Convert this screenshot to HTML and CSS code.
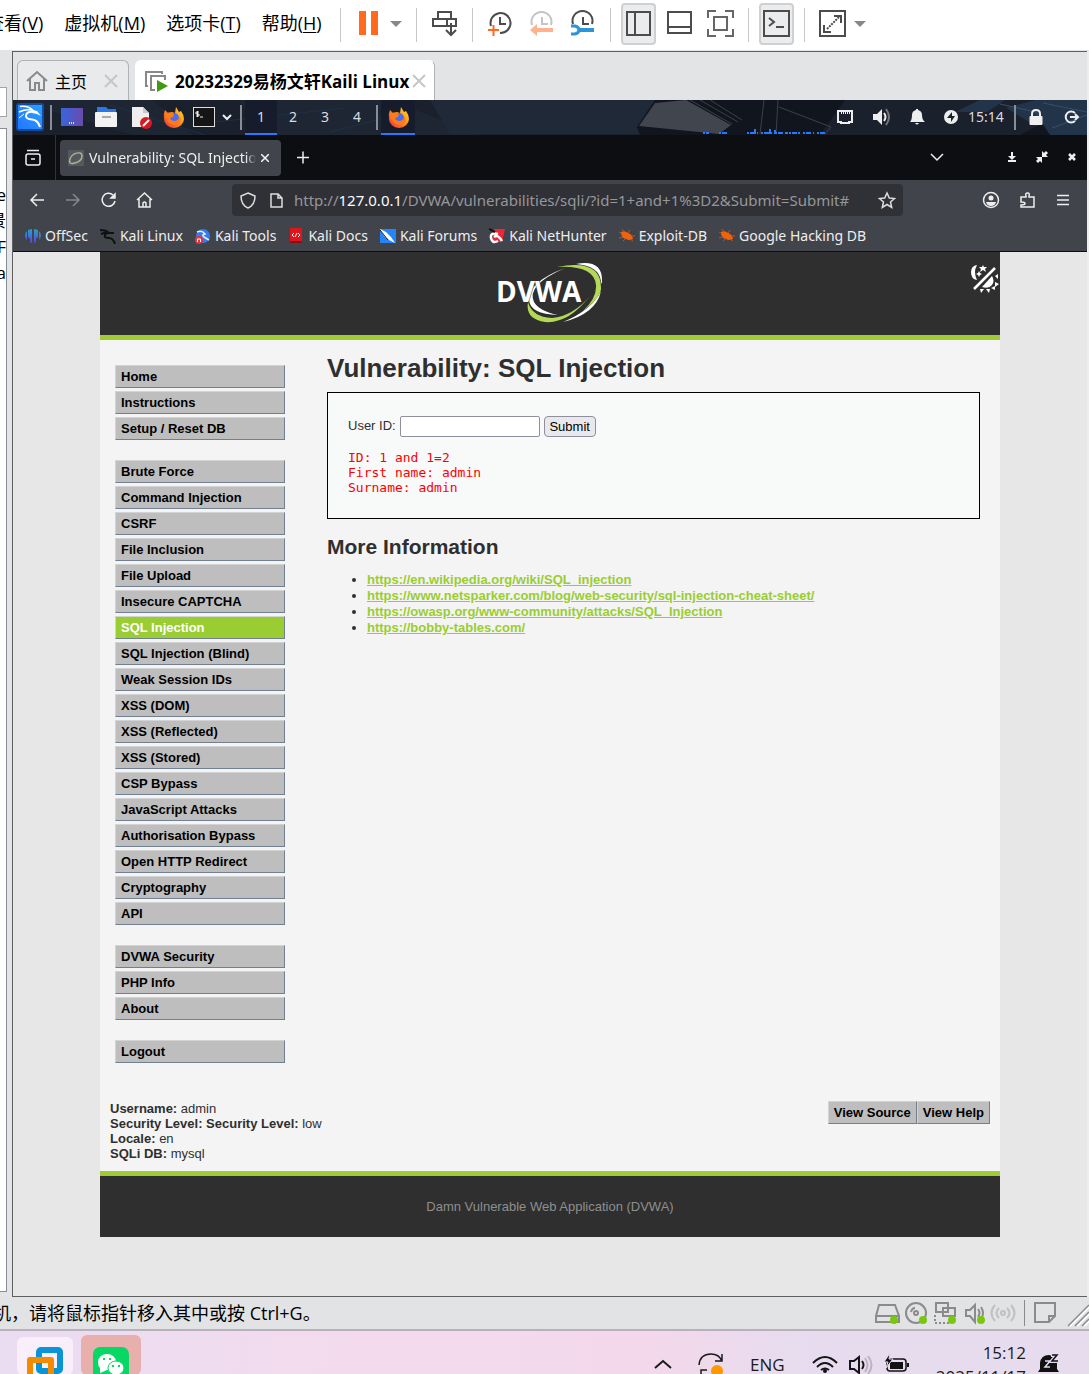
FILE: index.html
```html
<!DOCTYPE html>
<html lang="zh-CN">
<head>
<meta charset="utf-8">
<meta name="viewport" content="width=device-width, initial-scale=1">
<title>20232329易杨文轩Kaili Linux</title>
<link rel="stylesheet" href="styles.css">
</head>
<body>
<header class="toolbar">
  <nav class="menus">
    <button>查看(<u>V</u>)</button>
    <button>虚拟机(<u>M</u>)</button>
    <button>选项卡(<u>T</u>)</button>
    <button>帮助(<u>H</u>)</button>
  </nav>
  <div class="tools">
    <span class="rule"></span>
    <button aria-label="暂停"><svg width="75" height="50" viewBox="341 0 75 50"><path fill="#ff6a1f" d="M359 11h7v24h-7zM371 11h7v24h-7z"/><path fill="#888" d="M390 21h12l-6 6z"/></svg></button>
    <span class="rule"></span>
    <button aria-label="发送"><svg width="55" height="50" viewBox="417 0 55 50" fill="none" stroke="#4c4c4c" stroke-width="2"><path d="M438 19v-7h13v7M433 26v-7h23v7zM447 19v7M451 23v11M446 30l5 5 5-5"/></svg></button>
    <span class="rule"></span>
    <button aria-label="拍摄快照"><svg width="47" height="50" viewBox="473 0 47 50" fill="none" stroke="#4c4c4c" stroke-width="2"><path d="M491 26a10 10 0 1 1 9 7M500 17v7h6"/><path stroke="#ff6a1f" d="M488 30h11M493.500 25v11"/></svg></button>
    <button aria-label="恢复快照"><svg width="42" height="50" viewBox="520 0 42 50" fill="none" stroke="#c4c4c4" stroke-width="2"><path d="M532 25a10 10 0 1 1 19 0M542 17v7h6"/><path fill="#ffb28c" stroke="none" d="M530 30l7-6v4h16v4h-16v4z"/></svg></button>
    <button aria-label="管理快照"><svg width="48" height="50" viewBox="562 0 48 50" fill="none" stroke="#4c4c4c" stroke-width="2"><path d="M573 24a10 10 0 1 1 19 0M583 17v7h6"/><path stroke="#2b95d6" stroke-width="4" d="M578 30h16"/><path stroke="#2b95d6" stroke-width="3" d="M571 26h4q4 1 4 4t-4 4h-4"/></svg></button>
    <span class="rule"></span>
    <button aria-label="显示库"><svg width="50" height="50" viewBox="611 0 50 50" fill="none" stroke="#4c4c4c" stroke-width="2"><rect x="622" y="4" width="33" height="40" rx="3" fill="#ebecee" stroke="#cfd0d1"/><path d="M627 12h23v23h-23zM635 12v23"/></svg></button>
    <button aria-label="缩略图栏"><svg width="40" height="50" viewBox="661 0 40 50" fill="none" stroke="#4c4c4c" stroke-width="2"><path d="M668 12h23v21h-23zM668 27h23"/></svg></button>
    <button aria-label="全屏"><svg width="47" height="50" viewBox="701 0 47 50" fill="none" stroke="#666" stroke-width="2"><path d="M714 17h13v13h-13zM708 18v-7h8M725 11h8v7M733 29v7h-8M716 36h-8v-7"/></svg></button>
    <span class="rule"></span>
    <button aria-label="控制台"><svg width="55" height="50" viewBox="749 0 55 50" fill="none" stroke="#4c4c4c" stroke-width="2"><rect x="760" y="4" width="33" height="40" rx="3" fill="#ebecee" stroke="#cfd0d1"/><path d="M764 11h25v25h-25zM769 18l5 4-5 4M776 27h8"/></svg></button>
    <span class="rule"></span>
    <button aria-label="自由拉伸"><svg width="65" height="50" viewBox="805 0 65 50" fill="none" stroke="#4c4c4c" stroke-width="2"><path d="M820 11h25v25h-25zM834 16h7v7M824 25v7h7"/><path stroke-dasharray="2 1" d="M827 29l12-12"/><path stroke="none" fill="#888" d="M854 21h12l-6 6z"/></svg></button>
  </div>
</header>

<div class="workspace">
  <aside class="library">
    <div class="library-search"></div>
    <div class="library-tree"><span>e</span><span>景</span><span>F</span><span>a</span></div>
  </aside>
  <main class="vm">
    <div class="vm-tabs">
      <div class="vm-tab">
        <svg width="22" height="22" viewBox="0 0 22 22" fill="none" stroke="#8a8a8a" stroke-width="2"><path d="M1 11L11 2l10 9M4 9v11h5v-7h4v7h5V9"/></svg>
        <span>主页</span>
        <button aria-label="关闭主页"><svg width="14" height="14" viewBox="0 0 14 14" stroke="#c6c6c6" stroke-width="2"><path d="M1 1l12 12M13 1L1 13"/></svg></button>
      </div>
      <div class="vm-tab current">
        <svg width="24" height="24" viewBox="0 0 24 24" fill="none" stroke="#888" stroke-width="2"><path d="M4 17H2V3h16v2M11 21H7V7h14v4"/><path stroke="none" fill="#3f9a14" d="M13 11l11 6-11 6z"/></svg>
        <strong>20232329易杨文轩Kaili Linux</strong>
        <button aria-label="关闭虚拟机"><svg width="14" height="14" viewBox="0 0 14 14" stroke="#c6c6c6" stroke-width="2"><path d="M1 1l12 12M13 1L1 13"/></svg></button>
      </div>
    </div>

    <div class="panel">
      <svg class="panel-art" viewBox="13 100 1074 35" preserveAspectRatio="none" aria-hidden="true">
        <path fill="#1e2634" d="M13 100h140l40 35h-60zM240 100h150l90 35H260z"/><path stroke="#1b3145" d="M110 105l95 30M215 122l130-14M330 132l70-18"/>
        <path fill="#202938" d="M430 100h240l-30 34H450z"/>
        <path fill="#11151d" d="M637 127l18-27h190l-25 35H640z"/><path fill="#41454e" d="M655 103l31-3 45 25-12 9-80-8z"/><path stroke="#3d4148" fill="none" d="M690 100l42 24M700 100l38 22M710 100l32 20M764 100l-4 34M778 100l-2 34M779 107l52 20-6 7"/>
        <path fill="#22344a" d="M955 112l25-12h25l-18 12zM1006 108l30-8h51v35h-36zM1041 117l6 14-5-10z"/><path stroke="#36516a" fill="none" d="M1000 104l36 8 10 22M1043 103l44 9M1052 128l35-13"/>
        <path fill="#11151d" d="M1020 135l22-12 8 12z"/>
        <path stroke="#2777ff" stroke-width="2" stroke-dasharray="2 1 5 2 1 3" d="M703 133h6M719 133h8M747 133h78"/><path stroke="#2777ff" stroke-width="2" d="M755 134v-5M770 134v-5M775 134v-4M787 134v-2M799 134v-2M809 134v-2"/>
      </svg>
      <button aria-label="Kali"><svg width="37" height="35" viewBox="13 100 37 35"><defs><linearGradient id="kali" x1="0" y1="1" x2="1" y2="0"><stop offset="0" stop-color="#2377ff"/><stop offset="1" stop-color="#2aa1ff"/></linearGradient></defs><rect x="16" y="103" width="28" height="28" rx="3" fill="#134aa3"/><rect x="18" y="105" width="24" height="24" fill="url(#kali)"/><path fill="none" stroke="#fff" stroke-width="1.500" d="M20 106.500q9-1 14 5M19 112q9-4 15-1"/><path fill="none" stroke="#fff" stroke-width="2" d="M34 112q-8-1-8 4 0 3 6 3.500t8 7.500"/><path fill="#fff" d="M32 110l5 1 4 5-4-2-5-1z"/><path stroke="#fff" d="M24 114l-5 4"/></svg></button>
      <span class="panel-rule"></span>
      <button aria-label="Desktop"><svg width="42" height="35" viewBox="52 100 42 35"><defs><linearGradient id="desk"><stop stop-color="#3766dd"/><stop offset="1" stop-color="#6b4aaa"/></linearGradient></defs><rect x="61" y="108" width="22" height="18" fill="url(#desk)"/><path stroke="#fff" stroke-width="1.500" stroke-dasharray="1 1" d="M69 123h6"/></svg></button>
      <button aria-label="Files"><svg width="36" height="35" viewBox="94 100 36 35"><path fill="#2878e8" d="M97 107h9l2 2h8v6H97z"/><rect x="95" y="112" width="22" height="15" rx="1" fill="#f3f3f3"/><path stroke="#a9a9a9" stroke-width="2" d="M102 117h9"/></svg></button>
      <button aria-label="Text editor"><svg width="30" height="35" viewBox="130 100 30 35"><path fill="#eee" d="M132 107h11l6 6v14h-17z"/><path fill="#c9c9c9" d="M143 107l6 6h-6z"/><circle cx="146" cy="123" r="6" fill="#d51b20"/><path stroke="#fff" stroke-width="2" d="M143 126l6-6"/></svg></button>
      <button aria-label="Firefox"><svg width="28" height="35" viewBox="160 100 28 35"><defs><linearGradient id="fire" x1="1" y1="0" x2="0" y2="1"><stop stop-color="#ffe22e"/><stop offset=".5" stop-color="#ff8b18"/><stop offset="1" stop-color="#f0264a"/></linearGradient><symbol id="firefox" viewBox="0 0 21 21"><path fill="url(#fire)" d="M2 3l3 3 4-1 3 1 1-6 3 5 2-1q3 4 3 8a10 9 0 0 1-20 0Q0 7 2 3z"/><circle cx="11" cy="11" r="5" fill="#4a6cf0"/><path fill="#ff7a18" d="M2 7q4-3 9 0l-1 3-3 1q1 3 5 3 4-1 5-5 2 8-5 9-9 0-10-11z"/></symbol></defs><use href="#firefox" x="163" y="107" width="21" height="21"/></svg></button>
      <button aria-label="Terminal"><svg width="52" height="35" viewBox="188 100 52 35"><rect x="193.500" y="107.500" width="21" height="19" fill="#151515" stroke="#ddd"/><path fill="none" stroke="#eee" d="M199 112h-3v2h3v2h-3M197.500 111v6M200 117h3"/><path fill="none" stroke="#eee" stroke-width="2" d="M223 115l4 4 4-4"/></svg></button>
      <span class="panel-rule"></span>
      <button class="desk active">1</button><button class="desk">2</button><button class="desk">3</button><button class="desk">4</button>
      <span class="panel-rule"></span>
      <button class="task" aria-label="Firefox window"><svg width="21" height="21"><use href="#firefox" width="21" height="21"/></svg></button>
      <div class="panel-right">
        <svg width="138" height="35" viewBox="830 100 138 35" fill="#eee"><path fill="none" stroke="#eee" stroke-width="2" d="M838 111h14v11h-3v1h-8v-1h-3z"/><path stroke="#eee" stroke-width="2" stroke-dasharray="1 1" d="M841 113h9"/><path d="M873 114h4l5-5v16l-5-5h-4z"/><path fill="none" stroke="#eee" stroke-width="2" d="M884 113q3 4 0 8"/><path fill="none" stroke="#777" stroke-width="2" d="M886 109q6 8 0 16"/><path d="M910 122q2-2 2-7 0-4 4-5v-1h2v1q4 1 4 5 0 5 3 7zM915 123h4q-2 3-4 0z"/><circle cx="951" cy="117" r="7"/><path fill="#172231" d="M952 112l-5 6h4v4l4-6h-3z"/></svg>
        <span>15:14</span>
        <svg width="74" height="35" viewBox="1013 100 74 35"><path stroke="#888e98" stroke-width="2" d="M1015 105v25"/><rect x="1029.500" y="116" width="13" height="9" rx="1" fill="#eee"/><path fill="none" stroke="#eee" stroke-width="2" d="M1032 116v-2q0-4 4-4t4 4v2M1075 113a5.500 5.500 0 1 0 0 8M1070 117h7M1075 114l3 3-3 3"/></svg>
      </div>
    </div>

    <div class="fx-tabs">
      <button class="fx-view" aria-label="Firefox view"><svg width="42" height="45" viewBox="13 135 42 45" fill="none" stroke="#eee" stroke-width="1.500"><rect x="26" y="154" width="14" height="11" rx="2"/><path d="M27 150.500h12M31 159h4"/></svg></button>
      <div class="fx-tab">
        <svg width="16" height="16" viewBox="0 0 16 16"><path fill="#555861" d="M0 0h16v16H0z"/><path fill="none" stroke="#a6b48a" stroke-width="1.500" d="M6 4q8-3 8 2t-7 7-5-4q1-3 4-5"/></svg>
        <span>Vulnerability: SQL Injection</span>
        <button aria-label="Close tab"><svg width="8" height="8" viewBox="0 0 8 8" stroke="#f5f5f5" stroke-width="1.500"><path d="M0 0l8 8M8 0L0 8"/></svg></button>
      </div>
      <button aria-label="New tab"><svg width="43" height="45" viewBox="281 135 43 45" stroke="#eee" stroke-width="1.500"><path d="M297 157.500h12M303 151.500v12"/></svg></button>
      <div class="fx-window">
        <button aria-label="List tabs"><svg width="65" height="45" viewBox="925 135 65 45" fill="none" stroke="#eee" stroke-width="1.500"><path d="M931 154l6 6 6-6"/></svg></button>
        <button aria-label="Minimize"><svg width="37" height="45" viewBox="990 135 37 45" fill="#eee"><path d="M1011 152h2v4h3l-4 4-4-4h3zM1008 160h8v2h-8z"/></svg></button>
        <button aria-label="Restore"><svg width="30" height="45" viewBox="1027 135 30 45" fill="#eee"><path d="M1042 151l2 2 2-2 2 2-2 2 2 2h-6zM1036 157h6v6l-2-2-2 2-2-2 2-2z"/></svg></button>
        <button aria-label="Close"><svg width="30" height="45" viewBox="1057 135 30 45" stroke="#eee" stroke-width="2.500"><path d="M1069 154l6 6M1075 154l-6 6"/></svg></button>
      </div>
    </div>

    <div class="fx-nav">
      <button aria-label="Back"><svg width="42" height="40" viewBox="13 180 42 40" fill="none" stroke="#eee" stroke-width="1.500"><path d="M44 200H31M37 194l-6 6 6 6"/></svg></button>
      <button aria-label="Forward"><svg width="36" height="40" viewBox="55 180 36 40" fill="none" stroke="#85878d" stroke-width="1.500"><path d="M66 200h13M73 194l6 6-6 6"/></svg></button>
      <button aria-label="Reload"><svg width="36" height="40" viewBox="91 180 36 40" fill="none" stroke="#eee" stroke-width="1.500"><path d="M115 201a6.500 6.500 0 1 1-2-6"/><path fill="#eee" d="M115 194v4h-4z"/></svg></button>
      <button aria-label="Home"><svg width="36" height="40" viewBox="127 180 36 40" fill="none" stroke="#eee" stroke-width="1.500"><path d="M137 200l7.500-7 7.500 7M139 199v8h11v-8M143 207v-4q1.500-2 3 0v4"/></svg></button>
      <div class="address">
        <svg width="56" height="32" viewBox="232 184 56 32" fill="none" stroke="#ddd" stroke-width="1.500"><path d="M248 193l7 3q0 9-7 12-7-3-7-12zM271 194h7l4 4v9h-11zM278 194v4h4"/></svg>
        <div class="url" role="textbox" contenteditable="true" spellcheck="false" aria-label="Address">http://<b>127.0.0.1</b>/DVWA/vulnerabilities/sqli/?id=1+and+1%3D2&amp;Submit=Submit#</div>
        <button aria-label="Bookmark"><svg width="32" height="32" viewBox="871 184 32 32" fill="none" stroke="#ddd" stroke-width="1.500"><path d="M887 193l2.300 5 5.200.5-4 3.500 1.200 5.500-4.700-3-4.700 3 1.200-5.500-4-3.500 5.200-.5z"/></svg></button>
      </div>
      <div class="fx-actions">
        <button aria-label="Account"><svg width="36" height="40" viewBox="973 180 36 40" fill="none" stroke="#eee" stroke-width="1.500"><circle cx="991" cy="200" r="7.500"/><circle cx="991" cy="198" r="2.500" fill="#eee" stroke="none"/><path fill="#eee" stroke="none" d="M986 202h10q-1 4-5 4t-5-4z"/></svg></button>
        <button aria-label="Extensions"><svg width="36" height="40" viewBox="1009 180 36 40" fill="none" stroke="#eee" stroke-width="1.500"><path d="M1021 202v-5h5v-1q-1-3 1.500-3t1.500 3v1h5v10h-13v-2q4 0 4-1.500t-4-1.500z"/></svg></button>
        <button aria-label="Menu"><svg width="42" height="40" viewBox="1045 180 42 40" stroke="#eee" stroke-width="1.500"><path d="M1057 195.500h12M1057 200h12M1057 204.500h12"/></svg></button>
      </div>
    </div>

    <nav class="bookmarks">
      <a href="#"><svg width="16" height="16" viewBox="0 0 16 16"><defs><linearGradient id="offsec" x2="0" y2="1"><stop stop-color="#1fa5c4"/><stop offset="1" stop-color="#6a3fe6"/></linearGradient></defs><path fill="url(#offsec)" d="M2 3v9q-2-2-2-4.500T2 3zM3 2l4-1v14l-2-1q1-4-2-5zM9 1l4 1v7q-3 1-2 5l-2 1zM14 3q2 2 2 4.500T14 12z"/></svg>OffSec</a>
      <a href="#"><svg width="16" height="16" viewBox="0 0 16 16" fill="none" stroke="#111" stroke-width="2"><path d="M0 2q6 0 9 3M1 6q5-2 8-1M9 5Q4 5 5 9q1 1 4 1 4 0 6 6M9 5l5 0"/></svg>Kali Linux</a>
      <a href="#"><svg width="16" height="16" viewBox="0 0 16 16"><circle cx="8" cy="8" r="7" fill="#347cec"/><path fill="none" stroke="#e6f0ff" stroke-width="1.500" d="M2 4q5-2 8 2-4 1-1 3l5 3"/><circle cx="4" cy="12" r="4" fill="#df3641"/><path fill="none" stroke="#fff" d="M2.500 14v-3h3v3"/></svg>Kali Tools</a>
      <a href="#"><svg width="16" height="16" viewBox="0 0 16 16"><path fill="#df161c" d="M2 0h12v15H2z"/><path fill="#85101a" d="M2 13h12v2H2z"/><path fill="none" stroke="#fff" d="M6 5L4 7l2 2M7 9l2-4M10 5l2 2-2 2"/></svg>Kali Docs</a>
      <a href="#"><svg width="16" height="16" viewBox="0 0 16 16"><path fill="#2584f8" d="M0 1h16v14H0z"/><path fill="#fff" d="M0 1l6 3 5 5 4 6-6-3-5-4z"/><path stroke="#222" d="M0 2l8 10"/></svg>Kali Forums</a>
      <a href="#"><svg width="16" height="16" viewBox="0 0 16 16"><path fill="#ee2737" d="M5 1h11l-3 13H3z"/><path fill="none" stroke="#fff" stroke-width="2.500" d="M9 6Q1 4 2 10t7 3M5 9q4-3 8 4"/><path stroke="#111" stroke-width="2" d="M0 1l6 3"/></svg>Kali NetHunter</a>
      <a href="#"><svg width="16" height="16" viewBox="0 0 16 16"><g id="bug"><path fill="#ef630d" d="M2 4q4-2 7 1 4 1 5 6-4 2-7 0-5-1-5-7z"/><path stroke="#b9541c" d="M5 4L3 1M9 5l2-3M12 8l4 0M11 11l3 2M4 9l-4 1M6 11l-2 2M2 5L0 4"/></g></svg>Exploit-DB</a>
      <a href="#"><svg width="16" height="16" viewBox="0 0 16 16"><use href="#bug"/></svg>Google Hacking DB</a>
    </nav>

    <div class="page">
      <div class="dvwa">
        <header class="dvwa-header">
          <svg class="logo" width="108" height="62" viewBox="497 261 108 62" role="img" aria-label="DVWA">
            <path fill="#fff" d="M577 264q27-5 26 18-1 4-1-1-2-15-25-17zM602 291q-5 23-38 31 29-12 38-31z"/>
            <path fill="#b3d957" d="M558 267q45-9 44 22-1 9-18 22 14-13 13-26-2-20-39-18z"/>
            <path fill="#b3d957" d="M529 302q4 15 24 16 21-2 38-22-22 28-45 26-20-3-17-20z"/>
            <path fill="#fff" d="M566 268q-39 17-31 34 5 9 24 13-28-1-29-15-1-18 36-32z"/>
            <text class="logo-text" x="497" y="302">DVWA</text>
          </svg>
          <button class="theme" aria-label="Toggle theme"><svg width="30" height="30" viewBox="970 262 30 30" fill="#fff"><path d="M977 264q-4 7 0 15-6-1-6-8 0-6 6-7zM983 264l1 2h3l-2 2 1 3-3-2-3 2 1-3-2-2h3zM979 270l1 2 2 1-2 1-1 2-1-2-2-1 2-1z"/><path stroke="#fff" stroke-width="2.500" d="M974 288l21-21"/><path d="M982 286l10-11q3 5 0 9t-10 2zM995 275l3-2v5zM995 281l4 2-4 3zM980 288h4l-3 4zM986 288h4l-1 4zM991 287l4-2v4z"/></svg></button>
        </header>
        <div class="dvwa-body">
          <nav class="side">
            <ul><li><a href="#">Home</a></li><li><a href="#">Instructions</a></li><li><a href="#">Setup / Reset DB</a></li></ul>
            <ul><li><a href="#">Brute Force</a></li><li><a href="#">Command Injection</a></li><li><a href="#">CSRF</a></li><li><a href="#">File Inclusion</a></li><li><a href="#">File Upload</a></li><li><a href="#">Insecure CAPTCHA</a></li><li><a class="selected" href="#">SQL Injection</a></li><li><a href="#">SQL Injection (Blind)</a></li><li><a href="#">Weak Session IDs</a></li><li><a href="#">XSS (DOM)</a></li><li><a href="#">XSS (Reflected)</a></li><li><a href="#">XSS (Stored)</a></li><li><a href="#">CSP Bypass</a></li><li><a href="#">JavaScript Attacks</a></li><li><a href="#">Authorisation Bypass</a></li><li><a href="#">Open HTTP Redirect</a></li><li><a href="#">Cryptography</a></li><li><a href="#">API</a></li></ul>
            <ul><li><a href="#">DVWA Security</a></li><li><a href="#">PHP Info</a></li><li><a href="#">About</a></li></ul>
            <ul><li><a href="#">Logout</a></li></ul>
          </nav>
          <section class="content">
            <h1>Vulnerability: SQL Injection</h1>
            <div class="exercise">
              <form class="query"><label for="uid">User ID:</label><input id="uid" type="text"><button type="button">Submit</button></form>
              <pre>ID: 1 and 1=2
First name: admin
Surname: admin</pre>
            </div>
            <h2>More Information</h2>
            <ul class="links">
              <li><a href="#">https://en.wikipedia.org/wiki/SQL_injection</a></li>
              <li><a href="#">https://www.netsparker.com/blog/web-security/sql-injection-cheat-sheet/</a></li>
              <li><a href="#">https://owasp.org/www-community/attacks/SQL_Injection</a></li>
              <li><a href="#">https://bobby-tables.com/</a></li>
            </ul>
          </section>
        </div>
        <div class="system">
          <p><b>Username:</b> admin<br><b>Security Level: Security Level:</b> low<br><b>Locale:</b> en<br><b>SQLi DB:</b> mysql</p>
          <div class="views"><button>View Source</button><button>View Help</button></div>
        </div>
        <footer class="dvwa-footer">Damn Vulnerable Web Application (DVWA)</footer>
      </div>
    </div>
  </main>
</div>

<div class="status">
  <span>机，请将鼠标指针移入其中或按 Ctrl+G。</span>
  <svg width="219" height="30" viewBox="870 1297 219 30" fill="none" stroke="#8b8b8b" stroke-width="2">
    <path d="M879 1305h16l4 11v6h-23v-6zM876 1316h23"/><circle cx="916" cy="1313" r="10"/><circle cx="916" cy="1313" r="2"/><path d="M911 1312q1-4 4-4"/>
    <path d="M936 1303h12v9h-12zM943 1308h12v8h-12z" fill="#e2e3e5"/><path stroke-dasharray="2 2" d="M935 1315v8h14"/>
    <path d="M966 1310h4l5-5v17l-5-6h-4zM978 1309q3 4 0 8M981 1307q4 6 0 12"/>
    <g stroke="#c0c1c2"><circle cx="1003" cy="1313" r="2"/><path d="M999 1308q-5 5 0 10M1007 1308q5 5 0 10M995 1305q-7 8 0 16M1011 1305q7 8 0 16"/></g>
    <g fill="#7ac80e" stroke="none"><circle cx="894" cy="1320" r="4"/><circle cx="923" cy="1320" r="4"/><circle cx="952" cy="1320" r="4"/><circle cx="981" cy="1320" r="4"/></g>
    <path stroke-width="1" d="M1024.500 1300v26"/><path d="M1035 1303h20v13l-6 6h-14zM1055 1316h-6v6"/><path stroke="#fff" d="M1070 1326l19-19M1077 1326l12-12M1084 1326l5-5"/><path stroke-width="1.500" d="M1068 1326l21-21M1075 1326l14-14M1082 1326l7-7"/>
  </svg>
</div>
<footer class="taskbar">
  <div class="apps">
    <button class="app" aria-label="VMware"><svg width="56" height="38" viewBox="17 1337 56 38" fill="none" stroke-width="6" stroke-linejoin="round"><rect x="39" y="1350" width="21" height="21" rx="2" stroke="#0a94d6"/><path stroke="#f38b00" d="M30 1380v-20h21v14"/></svg></button>
    <button class="app wechat" aria-label="微信"><svg width="60" height="40" viewBox="81 1335 60 40"><rect x="93" y="1347" width="36" height="36" rx="7" fill="#07d765"/><path fill="#fff" d="M98 1362a9 8 0 1 1 9 8l-7 3v-5q-2-2-2-6z"/><ellipse cx="116" cy="1368" rx="8" ry="7" fill="#fff" stroke="#07d765"/><path fill="#07d765" d="M103 1358h2v2h-2zM109 1358h2v2h-2zM112 1365h2v2h-2zM118 1365h2v2h-2z"/></svg></button>
  </div>
  <div class="tray">
    <svg width="100" height="43" viewBox="645 1331 100 43" fill="none" stroke="#1b1b1b" stroke-width="2"><path d="M655 1368l8-7 8 7"/><g stroke-width="1.500"><path d="M699 1365q1-11 12-11 8 0 11 7M722 1354v7h-7M701 1374v-4h6"/></g><circle cx="717" cy="1371" r="6" fill="#ff9700" stroke="none"/></svg>
    <span class="lang">ENG</span>
    <svg width="110" height="43" viewBox="805 1331 110 43" fill="none" stroke="#151515" stroke-width="2"><path d="M813 1363q12-12 24 0M817 1367q8-8 16 0M821 1370q4-3 8 0"/><circle cx="825" cy="1371" r="2" fill="#111" stroke="none"/><path d="M850 1361h4l5-4v16l-5-4h-4zM862 1361q3 4 0 8"/><path stroke="#bdb2c4" d="M865 1358q5 7 0 14M868 1356q7 9 0 18"/><rect x="887" y="1359" width="19" height="12" rx="3" stroke-width="1.500"/><rect x="890" y="1362" width="13" height="7" fill="#111" stroke="none"/><path d="M908 1363v4"/><path fill="#111" stroke="#e6dcef" stroke-width="1" d="M890 1353l-6 9h4l-2 6 7-9h-4z"/></svg>
    <time>15:12<br>2025/11/17</time>
    <svg width="63" height="43" viewBox="1026 1331 63 43"><path fill="#111" d="M1038 1372l2-3v-6q1-8 9-8 8 1 8 8v6l2 3z"/><path fill="none" stroke="#e6dcef" stroke-width="4" d="M1051 1355h6l-5 6h6"/><path fill="none" stroke="#e6dcef" stroke-width="1.500" d="M1045 1361h5l-5 6h5"/><path fill="none" stroke="#111" stroke-width="1.500" d="M1052 1355h5l-5 6h6"/></svg>
  </div>
</footer>
</body>
</html>
```

FILE: styles.css
```css
* { box-sizing: border-box; }
body { margin: 0; min-height: 100vh; display: flex; flex-direction: column; overflow: hidden; background: #e3e4e6; font-family: "Open Sans", "Noto Sans CJK SC", sans-serif; color: #000; }
button { padding: 0; border: 0; background: none; font: inherit; color: inherit; }
svg { display: block; flex: none; }
ul, h1, h2, p, pre { margin: 0; padding: 0; }

.toolbar { height: 51px; display: flex; align-items: center; background: #fff; border-bottom: 1px solid #e3e4e6; overflow: hidden; font-size: 18px; }
.menus { flex: none; width: 354px; margin-left: -14px; padding-bottom: 6px; display: flex; gap: 21px; white-space: nowrap; }
.menus u { text-underline-offset: 2px; text-decoration-thickness: 1px; }
.tools { display: flex; align-items: center; }
.rule { width: 1px; height: 34px; background: #c8c8c8; }

.workspace { flex: 1; display: flex; padding-right: 2px; background: #eee; }
.library { width: 12px; flex: none; padding: 36px 5px 5px 0; background: #e3e4e6; font-size: 17px; overflow: hidden; display: flex; flex-direction: column; gap: 11px; }
.library-search { height: 30px; background: #fff; border: 1px solid #a4a4a8; border-left: 0; }
.library-tree { flex: 1; padding-top: 53px; background: #fff; border: 1px solid #8b8d95; border-left: 0; overflow: hidden; }
.library-tree span { display: flex; justify-content: flex-end; line-height: 26px; }
.vm { flex: 1; min-width: 0; display: flex; flex-direction: column; border: solid #606060; border-width: 1px 0 1px 1px; }

.vm-tabs { height: 48px; padding: 8px 4px 0; display: flex; align-items: flex-end; gap: 6px; background: #e3e4e6; }
.vm-tab { height: 40px; width: 112px; padding: 0 10px 0 8px; display: flex; align-items: center; gap: 7px; border: 1px solid #b0b1b3; border-bottom: 0; border-radius: 6px 6px 0 0; background: #e9eaec; font-size: 16px; white-space: nowrap; }
.vm-tab button { margin-left: auto; }
.vm-tab.current { width: 300px; background: #fff; border-color: #fff #b0b1b3 #fff #fff; font-size: 17px; }
.vm-tab.current button { margin-left: -4px; }

.panel { position: relative; height: 35px; display: flex; align-items: center; background: #1b202d; color: #d9dce0; font: 14px "Noto Sans", sans-serif; }
.panel > * { position: relative; }
.panel .panel-art { position: absolute; inset: 0; width: 100%; height: 100%; }
.panel-rule { width: 2px; height: 25px; background: #888e98; }
.desk { width: 32px; height: 35px; padding-bottom: 2px; border: solid transparent; border-width: 2px 0; }
.desk.active, .task { background: #161c2b; border-bottom-color: #2777ff; }
.panel-rule + .desk { margin-left: 3px; }
.desk + .panel-rule { margin-left: 3px; }
.task { width: 34px; height: 35px; margin-left: 3px; display: flex; align-items: center; justify-content: center; border: solid transparent; border-width: 2px 0; border-bottom-color: #2777ff; }
.panel-right { margin-left: auto; display: flex; align-items: center; }
.panel-right span { width: 45px; padding-bottom: 2px; }

.fx-tabs, .fx-nav, .bookmarks { font: 14px "Noto Sans", sans-serif; color: #eee; display: flex; align-items: center; }
.fx-tabs { height: 45px; background: #0d0e12; }
.fx-view { border-right: 1px solid #33343a; }
.fx-tab { width: 221px; height: 36px; margin-left: 4px; padding: 0 12px 0 8px; display: flex; align-items: center; gap: 5px; border-radius: 4px; background: #42444c; }
.fx-tab span { flex: 1; overflow: hidden; white-space: nowrap; -webkit-mask-image: linear-gradient(90deg, #000 94%, transparent); mask-image: linear-gradient(90deg, #000 94%, transparent); }
.fx-window, .fx-actions { display: flex; margin-left: auto; }
.fx-nav { height: 40px; background: #42444c; }
.address { flex: 0 1 671px; min-width: 0; height: 32px; margin-left: 69px; display: flex; align-items: center; border-radius: 4px; background: #303136; }
.url { flex: 1; min-width: 0; margin-left: 6px; overflow: hidden; white-space: nowrap; font-size: 15px; color: #96979b; outline: 0; }
.url b { font-weight: 400; color: #fbfbfe; }
.bookmarks { height: 32px; padding-left: 12px; gap: 12px; background: #42444c; border-bottom: 1px solid #0d0e12; white-space: nowrap; }
.bookmarks a { display: flex; align-items: center; gap: 4px; color: inherit; text-decoration: none; }

.page { flex: 1; background: #e7e7e7; font: 13px/15px "Liberation Sans", Arial, sans-serif; color: #2f2f2f; }
.dvwa { max-width: 900px; margin: 0 auto; background: #f4f4f4; }
.dvwa-header { position: relative; height: 88px; padding-top: 9px; display: flex; justify-content: center; align-items: flex-start; background: #2f2f2f; border-bottom: 5px solid #a0cb34; }
.logo-text { font: bold 28px "Open Sans", sans-serif; fill: #fff; stroke: #2f2f2f; stroke-width: 1px; paint-order: stroke; }
.theme { position: absolute; top: 11px; right: 0; }
.dvwa-body { display: flex; gap: 42px; padding: 0 20px 0 15px; }
.side { width: 170px; flex: none; padding-top: 25px; display: flex; flex-direction: column; gap: 20px; }
.side ul { list-style: none; display: flex; flex-direction: column; gap: 3px; }
.side a, .views button { display: block; height: 23px; padding: 0 5px; border: 1px solid; border-color: #d3d3d3 #708090 #708090 #d3d3d3; background: #bebebe; color: #000; font-weight: bold; line-height: 21px; text-decoration: none; white-space: nowrap; }
.side a.selected { background: #9acd32; color: #fff; }
.content { flex: 1; min-width: 0; padding-top: 13px; }
.content h1 { font-size: 26px; line-height: 30px; }
.exercise { margin-top: 9px; height: 127px; padding: 23px 20px; background: #f8fafa; border: 1px solid #000; }
.query { display: flex; align-items: center; gap: 4px; height: 21px; }
.query label { padding-bottom: 2px; }
.query input { width: 140px; height: 21px; border: 1px solid #8f8f9d; border-radius: 2px; background: #fff; }
.query button { width: 52px; height: 21px; border: 1px solid #8f8f9d; border-radius: 4px; background: #e9e9ed; color: #000; }
pre { margin-top: 13px; font: 13px/15px "DejaVu Sans Mono", monospace; color: #f00; }
.content h2 { margin-top: 16px; font-size: 21px; line-height: 24px; }
.links { margin-top: 13px; padding-left: 40px; line-height: 16px; }
.links a { color: #9acd32; font-weight: bold; }
.system { margin-top: 38px; padding: 0 10px 10px; display: flex; justify-content: space-between; align-items: flex-start; }
.views { display: flex; }
.dvwa-footer { padding: 23px 0; border-top: 5px solid #a0cb34; background: #2f2f2f; color: #8e8e8e; text-align: center; }

.status { height: 34px; padding-bottom: 2px; display: flex; align-items: center; justify-content: space-between; overflow: hidden; background: #e2e3e5; border-bottom: 2px solid #b9afbd; font-size: 18px; white-space: nowrap; }
.status span { margin-left: -7px; }
.taskbar { height: 43px; display: flex; justify-content: space-between; overflow: hidden; background: linear-gradient(90deg, #eadcf1, #f3dbed 32%, #f2d8ea 60%, #e7dcef 74%, #e7dcee); font-size: 17px; color: #1b1b1b; }
.apps { display: flex; gap: 8px; padding: 4px 0 0 17px; align-items: flex-start; }
.app { margin-top: 2px; border-radius: 6px; background: #f8effa; }
.wechat { margin-top: 0; background: #e8b0ac; }
.tray { display: flex; align-items: flex-start; }
.lang { width: 60px; padding: 22px 0 0 5px; line-height: 24px; }
.tray time { width: 111px; padding-top: 10px; line-height: 24px; text-align: right; }
```
